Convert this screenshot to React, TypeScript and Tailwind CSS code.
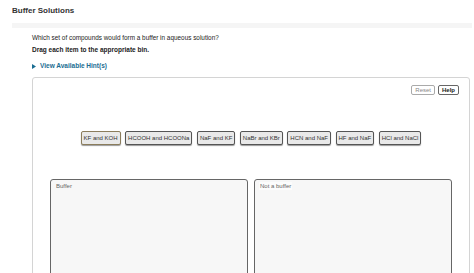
const items = [
  "KF and KOH",
  "HCOOH and HCOONa",
  "NaF and KF",
  "NaBr and KBr",
  "HCN and NaF",
  "HF and NaF",
  "HCl and NaCl",
];

export default function App() {
  return (
    <div
      className="w-[474px] h-[273px] overflow-hidden bg-white text-[#333]"
      style={{ fontFamily: '"Liberation Sans", Arial, sans-serif' }}
    >
      <h1 className="pt-[6px] pl-[12px] text-[8px] leading-[10px] font-bold text-[#333]">
        Buffer Solutions
      </h1>
      <div className="mt-[7px] ml-[12px] mr-[2px] h-[5px] bg-[#f5f5f5]" />

      <div className="pl-[32px] pr-[4px]">
        <p className="mt-[6px] text-[6.4px] leading-[8px] text-[#222]">
          Which set of compounds would form a buffer in aqueous solution?
        </p>
        <p className="mt-[4px] text-[6.5px] leading-[8px] font-bold text-[#222]">
          Drag each item to the appropriate bin.
        </p>
        <button className="mt-[8px] flex items-center gap-[4px] text-[6.5px] leading-[8px] font-bold text-[#1a6d92]">
          <svg width="4" height="5" viewBox="0 0 4 5">
            <path d="M0 0 L4 2.5 L0 5 Z" fill="#1a6d92" />
          </svg>
          View Available Hint(s)
        </button>

        <section className="mt-[7px] h-[220px] border border-[#d4d4d4] rounded-[3px]">
          <div className="flex justify-end gap-[3px] pt-[7px] pr-[10px]">
            <button className="h-[10px] px-[3px] border border-[#aaa] rounded-[2px] bg-white text-[6px] leading-[8px] text-[#888]">
              Reset
            </button>
            <button className="h-[10px] px-[3px] border border-[#666] rounded-[2px] bg-white text-[6px] leading-[8px] font-bold text-[#222]">
              Help
            </button>
          </div>

          <div className="mt-[36px] flex justify-center gap-[4.5px]">
            {items.map((t, i) => (
              <div
                key={t}
                className={`h-[14px] px-[2px] flex items-center rounded-[2px] border bg-[#e9e9e9] text-[6px] leading-[8px] text-[#333] shadow-[0_1px_1px_rgba(0,0,0,0.4)] ${
                  i === 0 ? "border-[#8b7d5c]" : "border-[#555]"
                }`}
              >
                {t}
              </div>
            ))}
          </div>

          <div className="mt-[34px] px-[17px] flex gap-[6px]">
            <div className="flex-1 h-[110px] flex flex-col items-start border border-[#666] rounded-[3px] bg-[#f7f7f7]">
              <span className="mt-[2px] ml-[4px] px-[1px] text-[6px] leading-[8px] text-[#666]">
                Buffer
              </span>
            </div>
            <div className="flex-1 h-[110px] flex flex-col items-start border border-[#666] rounded-[3px] bg-[#f7f7f7]">
              <span className="mt-[2px] ml-[4px] px-[1px] bg-[#fcfcfc] text-[6px] leading-[8px] text-[#666]">
                Not a buffer
              </span>
            </div>
          </div>
        </section>
      </div>
    </div>
  );
}
